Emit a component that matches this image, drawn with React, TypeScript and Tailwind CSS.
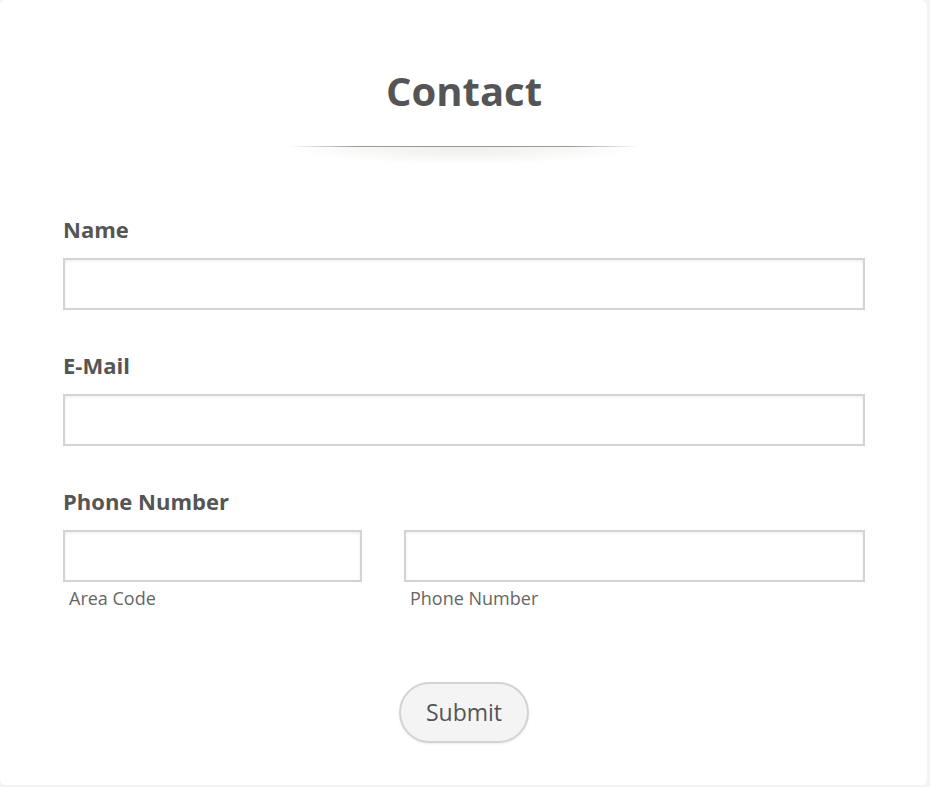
import React from 'react';

const font = { fontFamily: '"Open Sans", "Noto Sans", sans-serif' };

const inputCls =
  'block w-full h-[52px] bg-white border-2 border-[#d3d3d3] shadow-[inset_0_1px_3px_rgba(0,0,0,0.08)] outline-none';

function Field({ label }: { label: string }) {
  return (
    <div className="mt-[41px] first:mt-[50px]">
      <label className="block text-[22px] leading-[28px] font-bold text-[#555]">{label}</label>
      <input type="text" className={`mt-[15px] ${inputCls}`} />
    </div>
  );
}

export default function App(): React.ReactNode {
  return (
    <div className="w-[930px] h-[787px] bg-[#f4f4f4]" style={font}>
      <div className="w-[927px] h-[785px] bg-white rounded-md pt-[67px] pl-[63px] pr-[62px]">
        <h1 className="text-center text-[40px] leading-[48px] font-bold text-[#555]">Contact</h1>
        <div className="mt-[31px] mx-auto w-[350px]">
          <div className="h-px bg-[linear-gradient(to_right,transparent,#9c9890_20%,#9c9890_80%,transparent)]" />
          <div className="h-[18px] bg-[radial-gradient(ellipse_50%_100%_at_top,rgba(0,0,0,0.07),transparent)]" />
        </div>

        <div className="flex flex-col">
          <Field label="Name" />
          <Field label="E-Mail" />
          <div className="mt-[41px]">
            <label className="block text-[22px] leading-[28px] font-bold text-[#555]">Phone Number</label>
            <div className="mt-[15px] flex gap-[42px]">
              <div className="w-[299px]">
                <input type="text" className={inputCls} />
                <div className="mt-[5px] pl-[6px] text-[18px] leading-[22px] text-[#666]">Area Code</div>
              </div>
              <div className="flex-1">
                <input type="text" className={inputCls} />
                <div className="mt-[5px] pl-[6px] text-[18px] leading-[22px] text-[#666]">Phone Number</div>
              </div>
            </div>
          </div>
        </div>

        <div className="mt-[73px] flex justify-center">
          <button className="w-[130px] h-[61px] rounded-full bg-[#f4f4f4] border-2 border-[#d3d3d3] shadow-[0_1px_2px_rgba(0,0,0,0.08)] text-[23px] text-[#555]">
            Submit
          </button>
        </div>
      </div>
    </div>
  );
}
